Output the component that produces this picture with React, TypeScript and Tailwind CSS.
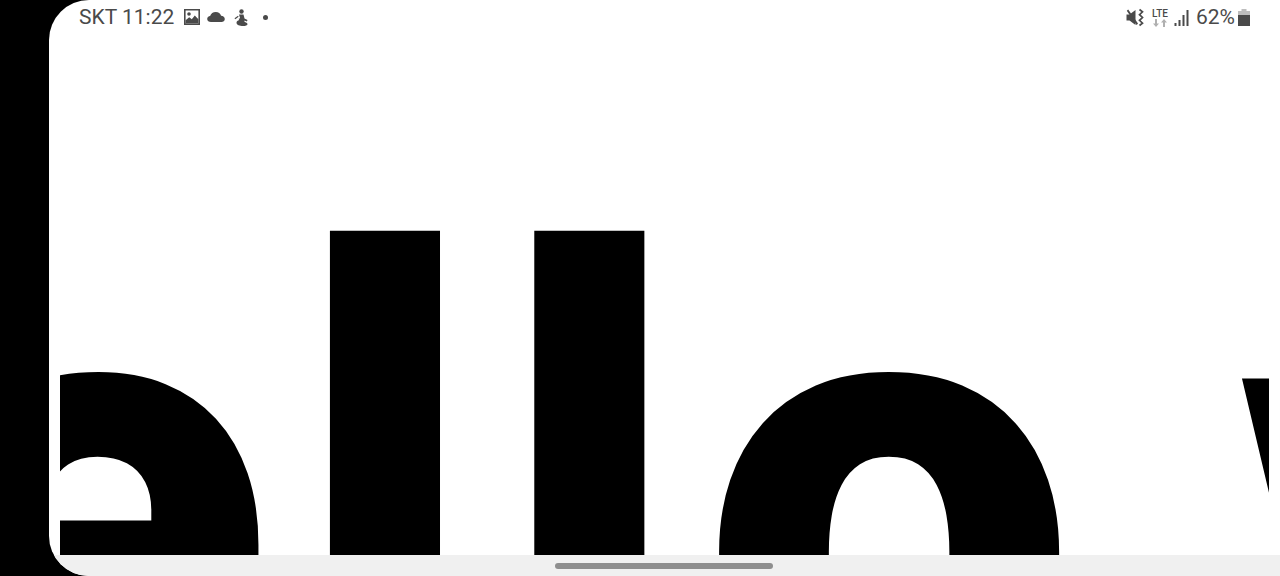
function PictureIcon() {
  return (
    <svg width="18" height="18" viewBox="0 0 18 18" className="-mt-[1px] fill-[#4a4a4a]">
      <path fillRule="evenodd" d="M1 1h16v16H1z M2.600 2.600v12.800h12.800V2.600z" />
      <circle cx="6" cy="6" r="1.800" />
      <path d="M2.600 15.400v-3.200l3.600-3 2.600 2 3-3.600 3.600 3.600v4.200z" />
    </svg>
  );
}

function CloudIcon() {
  return (
    <svg width="18" height="12" viewBox="0 0 18 12" className="-mt-[2px] fill-[#4a4a4a]">
      <path d="M4 11C1.800 11 .2 9.800 .2 8c0-1.600 1.200-2.700 2.900-2.900C3.800 2.600 6 1 8.800 1c2.600 0 4.700 1.600 5.300 3.800 2.100.1 3.700 1.400 3.700 3.200 0 1.800-1.500 3-3.400 3z" />
    </svg>
  );
}

function FigureIcon() {
  return (
    <svg width="16" height="18" viewBox="0 0 16 18" className="fill-[#4a4a4a]">
      <circle cx="8.500" cy="2.500" r="2.200" />
      <path d="M6 5.500h4.500l1 4 3 1.500-.6 1.400-2.400-.9v1.500c1.200.3 3 .9 3 2.200 0 1.100-2 1.800-4.500 1.800-3.300 0-6.500-1-6.500-3.200 0-1.300 1.200-2.300 2.700-2.700l-.6-1.400 1.500-.4z" />
      <path d="M1.500 9.200l3.500-2.400.6 1-3.300 2.400z" />
    </svg>
  );
}

function MuteVibrateIcon() {
  return (
    <svg width="19" height="19" viewBox="0 0 19 19" className="fill-[#4a4a4a]">
      <path d="M.5 6.500h3L9.500 2v15l-6-4.500h-3z" />
      <path d="M.8 2.800l1.400-1.400 9.800 14.200-1.400 1.400z" />
      <path d="M13.500 1.500l3 2.400-3 2.800 3 2.800-3 2.800 3 2.800-3 2.400" fill="none" stroke="#4a4a4a" strokeWidth="1.700" />
    </svg>
  );
}

function LteIcon() {
  return (
    <div className="flex w-[18px] flex-col items-center">
      <span className="text-[10px] leading-[11px] font-medium text-[#4a4a4a]">LTE</span>
      <svg width="16" height="8" viewBox="0 0 16 8" className="fill-[#b0b0b0]">
        <path d="M3 0h2v4.500h2L4 8 1 4.500h2z" />
        <path d="M11 8h2V3.500h2L12 0 9 3.500h2z" />
      </svg>
    </div>
  );
}

function SignalIcon() {
  return (
    <svg width="16" height="16" viewBox="0 0 16 16" className="fill-[#4a4a4a]">
      <rect x="0.500" y="13" width="2" height="3" />
      <rect x="4.500" y="10" width="2" height="6" />
      <rect x="8.500" y="5" width="2" height="11" />
      <rect x="12.500" y="0" width="2" height="16" />
    </svg>
  );
}

function BatteryIcon() {
  return (
    <svg width="12" height="17" viewBox="0 0 12 17">
      <path d="M3.500 0h5v2H12v15H0V2h3.500z" fill="#bdbdbd" />
      <rect x="0" y="6" width="12" height="11" fill="#4a4a4a" />
    </svg>
  );
}

export default function App() {
  return (
    <div className="flex h-[576px] w-[1280px] overflow-hidden bg-black font-['Roboto',sans-serif]">
      <div className="ml-[49px] flex min-w-0 flex-1 flex-col overflow-hidden rounded-l-[40px] bg-white">
        <div className="flex h-[35px] shrink-0 items-center justify-between pr-[30px] pl-[30px] text-[21px] text-[#4a4a4a]">
          <div className="flex items-center">
            <span className="mt-[1px]">SKT 11:22</span>
            <div className="ml-[9px] flex items-center">
              <PictureIcon />
              <div className="ml-[6px]"><CloudIcon /></div>
              <div className="ml-[8px]"><FigureIcon /></div>
              <span className="-mt-[1px] ml-[14px] h-[5px] w-[5px] rounded-full bg-[#4a4a4a]" />
            </div>
          </div>
          <div className="flex items-center">
            <MuteVibrateIcon />
            <div className="ml-[6px]"><LteIcon /></div>
            <div className="ml-[5px]"><SignalIcon /></div>
            <span className="mt-[1px] ml-[6px]">62%</span>
            <div className="ml-[3px]"><BatteryIcon /></div>
          </div>
        </div>
        <div className="mx-[11px] min-h-0 flex-1 overflow-hidden">
          <h1 className="mt-[118px] -ml-[641px] font-['Roboto',sans-serif] text-[667px] leading-[700px] font-black tracking-[21px] whitespace-nowrap text-black [word-spacing:-50px]">
            Hello world
          </h1>
        </div>
        <div className="flex h-[21px] shrink-0 items-center bg-[#f0f0f0] pl-[506px]">
          <div className="h-[6px] w-[218px] rounded-full bg-[#8e8e8e]" />
        </div>
      </div>
    </div>
  );
}
